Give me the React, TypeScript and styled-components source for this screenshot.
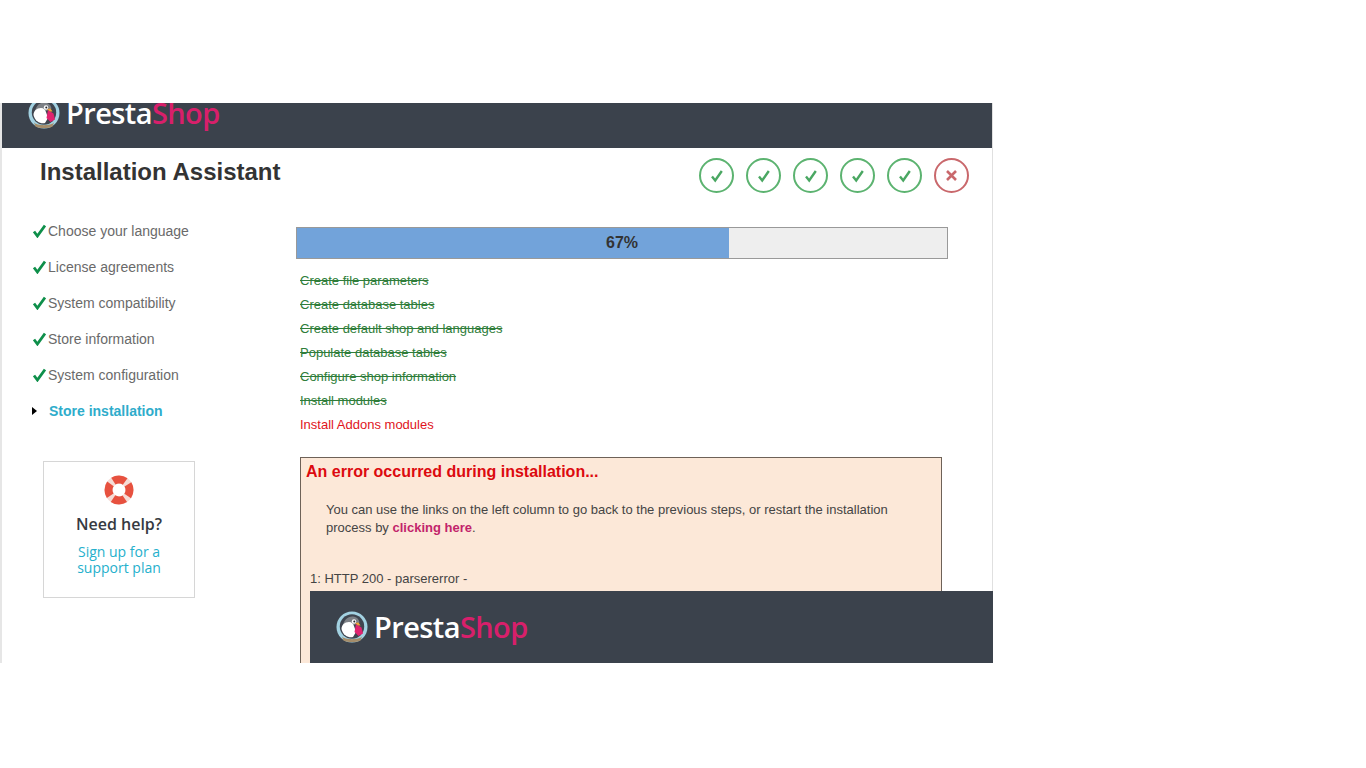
import styled, { createGlobalStyle } from "styled-components";

const GlobalStyle = createGlobalStyle`
  html, body {
    margin: 0;
    padding: 0;
    background: #fff;
  }
  body {
    font-family: "Liberation Sans", Arial, sans-serif;
  }
`;

const Page = styled.div`
  padding-top: 103px;
  height: 768px;
  box-sizing: border-box;
  overflow: hidden;
`;

const Frame = styled.div`
  position: relative;
  width: 993px;
  height: 560px;
  box-sizing: border-box;
  border-left: 2px solid #e6e6e6;
  border-right: 1px solid #e0e0e0;
`;

const Header = styled.header`
  height: 45px;
  background: #3b424c;
  padding-left: 26px;
  overflow: hidden;
`;

const HeaderLogo = styled.div`
  margin-top: -6px;
`;

const LogoWrap = styled.div`
  display: flex;
  align-items: center;
  gap: 6px;
  height: 32px;
`;

const LogoText = styled.span`
  font-family: "Open Sans", sans-serif;
  font-size: 29px;
  font-weight: 600;
  line-height: 30px;
  letter-spacing: -0.6px;
  color: #fff;
`;

const LogoAccent = styled.span`
  color: #d81f6b;
`;

const TitleRow = styled.div`
  display: flex;
  justify-content: space-between;
  height: 65px;
  padding: 10px 23px 0 38px;
  box-sizing: border-box;
`;

const Title = styled.h1`
  margin: 0;
  font-size: 24px;
  line-height: 28px;
  font-weight: 700;
  color: #333;
`;

const Steps = styled.div`
  display: flex;
  gap: 12px;
`;

const StepCircle = styled.div<{ $failed?: boolean }>`
  width: 35px;
  height: 35px;
  box-sizing: border-box;
  border-radius: 50%;
  border: 2px solid ${(p) => (p.$failed ? "#c9686c" : "#5cb370")};
  display: flex;
  align-items: center;
  justify-content: center;
`;

const Columns = styled.div`
  display: flex;
  height: 450px;
  overflow: hidden;
`;

const Sidebar = styled.aside`
  width: 294px;
  flex: none;
`;

const NavList = styled.ul`
  list-style: none;
  margin: 0;
  padding: 0 0 0 30px;
`;

const NavItem = styled.li<{ $active?: boolean }>`
  display: flex;
  align-items: center;
  gap: ${(p) => (p.$active ? "12px" : "2px")};
  height: 36px;
  font-size: 14px;
  font-weight: ${(p) => (p.$active ? 700 : 400)};
  color: ${(p) => (p.$active ? "#2eaccb" : "#6a6a6a")};
`;

const HelpBox = styled.div`
  width: 152px;
  height: 137px;
  box-sizing: border-box;
  margin: 32px 0 0 41px;
  border: 1px solid #d6d6d6;
  display: flex;
  flex-direction: column;
  align-items: center;
  padding-top: 13px;
  font-family: "Open Sans", sans-serif;
`;

const HelpTitle = styled.div`
  margin-top: 8px;
  font-size: 16px;
  line-height: 22px;
  font-weight: 600;
  color: #363a41;
`;

const HelpLink = styled.a`
  margin-top: 9px;
  width: 110px;
  text-align: center;
  font-size: 14px;
  line-height: 16px;
  color: #25b0cc;
`;

const Main = styled.main`
  flex: 1;
  padding-top: 14px;
`;

const ProgressTrack = styled.div`
  position: relative;
  width: 652px;
  height: 32px;
  box-sizing: border-box;
  border: 1px solid #999;
  background: #eee;
`;

const ProgressFill = styled.div`
  height: 100%;
  background: #72a3da;
`;

const ProgressLabel = styled.div`
  position: absolute;
  inset: 0;
  display: flex;
  align-items: center;
  justify-content: center;
  font-size: 16px;
  font-weight: 700;
  color: #333;
`;

const TaskList = styled.ul`
  list-style: none;
  margin: 10px 0 0;
  padding: 0 0 0 4px;
`;

const Task = styled.li<{ $failed?: boolean }>`
  height: 24px;
  font-size: 13px;
  line-height: 24px;
  color: ${(p) => (p.$failed ? "#e0141c" : "#2f7d3a")};
  text-decoration: ${(p) => (p.$failed ? "none" : "line-through")};
`;

const ErrorBox = styled.div`
  width: 642px;
  height: 300px;
  box-sizing: border-box;
  margin: 20px 0 0 4px;
  border: 1px solid #6e6258;
  background: #fce8d8;
  padding: 4px 5px;
`;

const ErrorTitle = styled.h2`
  margin: 0;
  font-size: 16px;
  line-height: 19px;
  font-weight: 700;
  color: #dc0a0f;
`;

const ErrorText = styled.p`
  margin: 20px 0 0 20px;
  max-width: 575px;
  font-size: 13px;
  line-height: 18px;
  color: #444;
`;

const RestartLink = styled.a`
  font-weight: 700;
  color: #c2246b;
`;

const ErrorLine = styled.div`
  margin: 33px 0 0 4px;
  font-size: 13px;
  line-height: 18px;
  color: #444;
`;

const FooterBar = styled.footer`
  position: absolute;
  right: -1px;
  bottom: 0;
  width: 683px;
  height: 72px;
  box-sizing: border-box;
  background: #3b424c;
  padding: 20px 0 0 26px;
`;

function Puffin() {
  return (
    <svg width="32" height="32" viewBox="0 0 32 32">
      <circle cx="16" cy="16" r="15.5" fill="#a3d2e2" />
      <circle cx="16" cy="15.5" r="12.2" fill="#3f454f" />
      <path d="M7 14c1-5 5-9 10-8.500 4 .5 6 3 6.500 6l-4 2-5 1z" fill="#7d8186" />
      <path d="M5.500 18c0-4 3-7 7.500-7 3 0 4 2 5 4l2 6-3 5c-4 1-10-1-11.500-8z" fill="#fff" />
      <circle cx="18" cy="10.500" r="2.200" fill="#fff" />
      <circle cx="18.300" cy="10.600" r="1" fill="#22262c" />
      <path d="M20 13l5.500 3.500 1.500 6-4.500 2.500-4-4z" fill="#e0246f" />
      <path d="M19 12l3.500-.5 2 3-2.500 0z" fill="#f0a23a" />
      <path d="M6 25.500c3 3.500 17 3.500 20 0l-1.500 4c-4 2-13 2-17 0z" fill="#a58d6a" />
    </svg>
  );
}

function Logo() {
  return (
    <LogoWrap>
      <Puffin />
      <LogoText>
        Presta<LogoAccent>Shop</LogoAccent>
      </LogoText>
    </LogoWrap>
  );
}

function NavCheck() {
  return (
    <svg width="14" height="14" viewBox="0 0 14 14">
      <path d="M2 7.500l3.400 4.500L13 1.500" fill="none" stroke="#0e8f4a" strokeWidth="2.800" />
    </svg>
  );
}

function Lifebuoy() {
  return (
    <svg width="30" height="30" viewBox="0 0 30 30">
      <circle cx="15" cy="15" r="10.500" fill="none" stroke="#f5dcd6" strokeWidth="8" />
      <circle
        cx="15"
        cy="15"
        r="10.500"
        fill="none"
        stroke="#e7513f"
        strokeWidth="8"
        strokeDasharray="12.500 3.990"
        strokeDashoffset="6.250"
      />
    </svg>
  );
}

const navSteps = [
  "Choose your language",
  "License agreements",
  "System compatibility",
  "Store information",
  "System configuration",
];

const tasks = [
  "Create file parameters",
  "Create database tables",
  "Create default shop and languages",
  "Populate database tables",
  "Configure shop information",
  "Install modules",
];

const progress = 67;

export default function App() {
  return (
    <Page>
      <GlobalStyle />
      <Frame>
        <Header>
          <HeaderLogo>
            <Logo />
          </HeaderLogo>
        </Header>
        <TitleRow>
          <Title>Installation Assistant</Title>
          <Steps>
            {[0, 1, 2, 3, 4].map((n) => (
              <StepCircle key={n}>
                <svg width="16" height="16" viewBox="0 0 16 16">
                  <path d="M3 8.500l3.200 4L12.800 3" fill="none" stroke="#4aa762" strokeWidth="2.400" />
                </svg>
              </StepCircle>
            ))}
            <StepCircle $failed>
              <svg width="13" height="13" viewBox="0 0 13 13">
                <path d="M2 2l9 9M11 2l-9 9" fill="none" stroke="#c9686c" strokeWidth="2.600" />
              </svg>
            </StepCircle>
          </Steps>
        </TitleRow>
        <Columns>
          <Sidebar>
            <NavList>
              {navSteps.map((step) => (
                <NavItem key={step}>
                  <NavCheck />
                  {step}
                </NavItem>
              ))}
              <NavItem $active>
                <svg width="5" height="8" viewBox="0 0 5 8">
                  <path d="M0 0l5 4-5 4z" fill="#000" />
                </svg>
                Store installation
              </NavItem>
            </NavList>
            <HelpBox>
              <Lifebuoy />
              <HelpTitle>Need help?</HelpTitle>
              <HelpLink>Sign up for a support plan</HelpLink>
            </HelpBox>
          </Sidebar>
          <Main>
            <ProgressTrack>
              <ProgressFill style={{ width: `${progress - 0.5}%` }} />
              <ProgressLabel>{progress}%</ProgressLabel>
            </ProgressTrack>
            <TaskList>
              {tasks.map((task) => (
                <Task key={task}>{task}</Task>
              ))}
              <Task $failed>Install Addons modules</Task>
            </TaskList>
            <ErrorBox>
              <ErrorTitle>An error occurred during installation...</ErrorTitle>
              <ErrorText>
                You can use the links on the left column to go back to the previous steps, or restart the
                installation process by <RestartLink>clicking here</RestartLink>.
              </ErrorText>
              <ErrorLine>1: HTTP 200 - parsererror -</ErrorLine>
            </ErrorBox>
          </Main>
        </Columns>
        <FooterBar>
          <Logo />
        </FooterBar>
      </Frame>
    </Page>
  );
}
